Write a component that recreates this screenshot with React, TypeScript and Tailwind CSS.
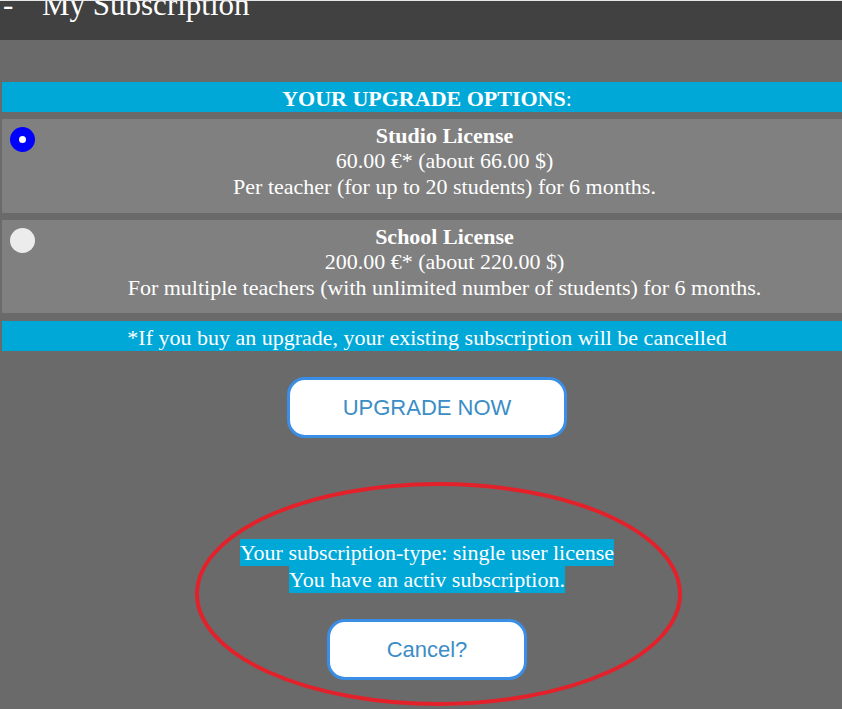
import React from "react";

interface UpgradeOption {
  id: string;
  name: string;
  price: string;
  note: string;
  selected: boolean;
}

const serif = { fontFamily: '"Liberation Serif", "Times New Roman", serif' };

const options: UpgradeOption[] = [
  {
    id: "studio",
    name: "Studio License",
    price: "60.00 €* (about 66.00 $)",
    note: "Per teacher (for up to 20 students) for 6 months.",
    selected: true,
  },
  {
    id: "school",
    name: "School License",
    price: "200.00 €* (about 220.00 $)",
    note: "For multiple teachers (with unlimited number of students) for 6 months.",
    selected: false,
  },
];

const Radio: React.FC<{ checked: boolean }> = ({ checked }) =>
  checked ? (
    <div className="w-[25px] h-[25px] rounded-full border-[9px] border-[#0000ff] bg-white" />
  ) : (
    <div className="w-[25px] h-[25px] rounded-full bg-[#ececec]" />
  );

const App: React.FC = () => {
  return (
    <div className="w-full min-h-[709px] overflow-hidden bg-[#6a6a6a] border-t border-[#e6e6e6] text-white" style={serif}>
      <div className="relative w-[852px] min-h-[708px]">
        {/* header, scrolled so its title is cut at the top */}
        <div className="h-[39px] bg-[#414141] overflow-hidden">
          <div className="flex -mt-[12px] text-[31px] leading-[31px]">
            <span className="w-[42px] pl-[3px]">-</span>
            <span>My Subscription</span>
          </div>
        </div>

        <div className="mt-[42px] pl-[2px] text-[22px]">
          <div className="h-[30px] bg-[#00a8d8] text-center pt-[3px] leading-[27px]">
            <b>YOUR UPGRADE OPTIONS</b>:
          </div>

          {options.map((o, i) => (
            <div
              key={o.id}
              className={`flex bg-[#808080] w-[840px] ${i === 0 ? "mt-[7px] h-[94px]" : "mt-[7px] h-[93px]"}`}
            >
              <div className="w-[35px] pl-[8px] pt-[8px]">
                <Radio checked={o.selected} />
              </div>
              <div className="flex-1 pt-[4px] text-center leading-[25.3px] pl-[10px]">
                <div className="font-bold">{o.name}</div>
                <div>{o.price}</div>
                <div>{o.note}</div>
              </div>
            </div>
          ))}

          <div className="mt-[8px] h-[30px] bg-[#00a8d8] text-center pt-[3px] leading-[27px]">
            *If you buy an upgrade, your existing subscription will be cancelled
          </div>

          <div className="flex justify-center mt-[26px]">
            <button
              className="w-[280px] h-[61px] rounded-[18px] border-[3px] border-[#3a8ee6] bg-white text-[22px] text-[#3b8dc6]"
              style={{ fontFamily: '"Liberation Sans", Arial, sans-serif' }}
            >
              UPGRADE NOW
            </button>
          </div>

          <div className="mt-[102px] text-center leading-[26.5px]">
            <span className="bg-[#00a8d8] py-[1px]">Your subscription-type: single user license</span>
            <br />
            <span className="bg-[#00a8d8] py-[1px]">You have an activ subscription.</span>
          </div>

          <div className="flex justify-center mt-[26px]">
            <button
              className="w-[200px] h-[61px] rounded-[18px] border-[3px] border-[#3a8ee6] bg-white text-[22px] text-[#3b8dc6]"
              style={{ fontFamily: '"Liberation Sans", Arial, sans-serif' }}
            >
              Cancel?
            </button>
          </div>
        </div>

        {/* red annotation ellipse drawn over the page */}
        <svg className="absolute left-[195px] top-[481px] pointer-events-none" width="488" height="226" viewBox="0 0 488 226">
          <ellipse cx="243.5" cy="112" rx="241.5" ry="110" fill="none" stroke="#e3212b" strokeWidth="4" />
        </svg>
      </div>
    </div>
  );
};

export default App;
